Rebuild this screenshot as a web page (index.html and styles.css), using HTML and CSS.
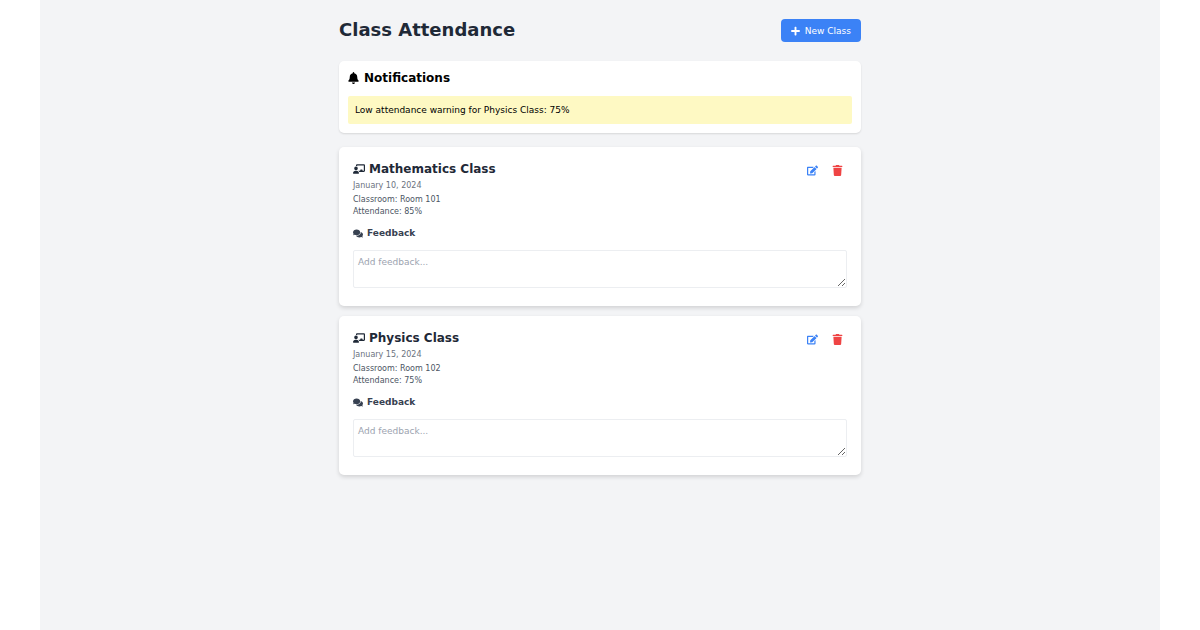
FILE: index.html
```html
<!DOCTYPE html>
<html lang="en">
<head>
  <meta charset="UTF-8">
  <meta name="viewport" content="width=device-width, initial-scale=1.0">
  <title>Class Attendance</title>
  <link rel="stylesheet" href="styles.css">
</head>
<body>

<!-- Shared icons -->
<svg class="icon-defs" aria-hidden="true">
  <symbol id="icon-teacher" viewBox="0 0 640 512">
    <path d="M160 64c0-35.3 28.7-64 64-64H576c35.3 0 64 28.7 64 64V352c0 35.3-28.7 64-64 64H336.8c-11.8-25.5-29.9-47.5-52.4-64H384V320c0-17.7 14.3-32 32-32h64c17.7 0 32 14.3 32 32v32h64V64H224v49.1C205.2 102.2 183.3 96 160 96V64zm0 64a96 96 0 1 1 0 192 96 96 0 1 1 0-192zM133.3 352h53.3C260.3 352 320 411.7 320 485.3c0 14.7-11.9 26.7-26.7 26.7H26.7C11.9 512 0 500.1 0 485.3C0 411.7 59.7 352 133.3 352z"/>
  </symbol>
  <symbol id="icon-comments" viewBox="0 0 576 512">
    <path d="M416 192c0-88.4-93.1-160-208-160S0 103.6 0 192c0 34.3 14.1 65.9 38 92-13.4 30.2-35.5 54.2-35.8 54.5-2.2 2.3-2.8 5.7-1.5 8.7S4.8 352 8 352c36.6 0 66.9-12.3 88.7-25 32.2 15.7 70.3 25 111.3 25 114.9 0 208-71.6 208-160zm122 220c23.9-26 38-57.7 38-92 0-66.9-53.5-124.2-129.3-148.1.9 6.6 1.3 13.3 1.3 20.1 0 105.9-107.7 192-240 192-10.8 0-21.3-.8-31.7-1.9C207.8 439.6 281.8 480 368 480c41 0 79.1-9.2 111.3-25 21.8 12.7 52.1 25 88.7 25 3.2 0 6.1-1.9 7.3-4.8 1.3-2.9.7-6.3-1.5-8.7-.3-.3-22.4-24.2-35.8-54.5z"/>
  </symbol>
  <symbol id="icon-edit" viewBox="0 0 576 512">
    <path d="M402.6 83.2l90.2 90.2c3.8 3.8 3.8 10 0 13.8L274.4 405.6l-92.8 10.3c-12.4 1.4-22.9-9.1-21.5-21.5l10.3-92.8L388.8 83.2c3.8-3.8 10-3.8 13.8 0zm162-22.9l-48.8-48.8c-15.2-15.2-39.9-15.2-55.2 0l-35.4 35.4c-3.8 3.8-3.8 10 0 13.8l90.2 90.2c3.8 3.8 10 3.8 13.8 0l35.4-35.4c15.2-15.3 15.2-40 0-55.2zM384 346.2V448H64V128h229.8c3.2 0 6.2-1.3 8.5-3.5l40-40c7.6-7.6 2.2-20.5-8.5-20.5H48C21.5 64 0 85.5 0 112v352c0 26.5 21.5 48 48 48h352c26.5 0 48-21.5 48-48V306.2c0-10.7-12.9-16-20.5-8.5l-40 40c-2.2 2.3-3.5 5.3-3.5 8.5z"/>
  </symbol>
  <symbol id="icon-trash" viewBox="0 0 448 512">
    <path d="M432 32H312l-9.4-18.7A24 24 0 0 0 281.1 0H166.8a23.72 23.72 0 0 0-21.4 13.3L136 32H16A16 16 0 0 0 0 48v32a16 16 0 0 0 16 16h416a16 16 0 0 0 16-16V48a16 16 0 0 0-16-16zM53.2 467a48 48 0 0 0 47.9 45h245.8a48 48 0 0 0 47.9-45L416 128H32z"/>
  </symbol>
</svg>

<main class="container">
  <header class="page-header">
    <h1>Class Attendance</h1>
    <button type="button" class="new-class">
      <svg class="icon-plus" viewBox="0 0 448 512" aria-hidden="true"><path d="M416 208H272V64c0-17.67-14.33-32-32-32h-32c-17.67 0-32 14.33-32 32v144H32c-17.67 0-32 14.33-32 32v32c0 17.67 14.33 32 32 32h144v144c0 17.67 14.33 32 32 32h32c17.67 0 32-14.33 32-32V304h144c17.67 0 32-14.33 32-32v-32c0-17.67-14.33-32-32-32z"/></svg>
      New Class
    </button>
  </header>

  <section class="notifications">
    <h2>
      <svg class="icon-bell" viewBox="0 0 448 512" aria-hidden="true"><path d="M224 512c35.32 0 63.97-28.65 63.97-64H160.03c0 35.35 28.65 64 63.97 64zm215.39-149.71c-19.32-20.76-55.47-51.99-55.47-154.29 0-77.7-54.48-139.9-127.94-155.16V32c0-17.67-14.32-32-31.98-32s-31.98 14.33-31.98 32v20.84C118.56 68.1 64.08 130.3 64.08 208c0 102.3-36.15 133.53-55.47 154.29-6 6.45-8.66 14.16-8.61 21.71.11 16.4 12.98 32 32.1 32h383.8c19.12 0 32-15.6 32.1-32 .05-7.55-2.61-15.27-8.61-21.71z"/></svg>
      Notifications
    </h2>
    <p class="warning">Low attendance warning for Physics Class: 75%</p>
  </section>

  <div class="class-list">
    <article class="class-card">
      <div class="class-top">
        <div>
          <h2><svg class="icon-teacher" aria-hidden="true"><use href="#icon-teacher"/></svg>Mathematics Class</h2>
          <p class="date">January 10, 2024</p>
          <p class="detail">Classroom: Room 101</p>
          <p class="detail">Attendance: 85%</p>
        </div>
        <div class="actions">
          <button type="button" class="edit" aria-label="Edit"><svg aria-hidden="true"><use href="#icon-edit"/></svg></button>
          <button type="button" class="delete" aria-label="Delete"><svg aria-hidden="true"><use href="#icon-trash"/></svg></button>
        </div>
      </div>
      <label for="feedback1"><svg class="icon-comments" aria-hidden="true"><use href="#icon-comments"/></svg>Feedback</label>
      <textarea id="feedback1" placeholder="Add feedback..."></textarea>
    </article>

    <article class="class-card">
      <div class="class-top">
        <div>
          <h2><svg class="icon-teacher" aria-hidden="true"><use href="#icon-teacher"/></svg>Physics Class</h2>
          <p class="date">January 15, 2024</p>
          <p class="detail">Classroom: Room 102</p>
          <p class="detail">Attendance: 75%</p>
        </div>
        <div class="actions">
          <button type="button" class="edit" aria-label="Edit"><svg aria-hidden="true"><use href="#icon-edit"/></svg></button>
          <button type="button" class="delete" aria-label="Delete"><svg aria-hidden="true"><use href="#icon-trash"/></svg></button>
        </div>
      </div>
      <label for="feedback2"><svg class="icon-comments" aria-hidden="true"><use href="#icon-comments"/></svg>Feedback</label>
      <textarea id="feedback2" placeholder="Add feedback..."></textarea>
    </article>
  </div>
</main>

</body>
</html>
```
FILE: styles.css
```css
* { box-sizing: border-box; }
html { background: #fff; }
body {
  margin: 0 40px;
  min-height: 100vh;
  background: #f3f4f6;
  color: #000;
  font-family: "DejaVu Sans", sans-serif;
  font-size: 9px;
  line-height: 14px;
}
h1, h2, p { margin: 0; }
button, textarea { font: inherit; }
button { border: none; cursor: pointer; }
svg { fill: currentColor; flex: none; }
.icon-defs { position: absolute; width: 0; height: 0; }

.container {
  max-width: 522px;
  margin: 0 auto;
  padding: 19px 0;
}
.page-header {
  display: flex;
  align-items: flex-start;
  justify-content: space-between;
  margin-bottom: 19px;
}
h1 { font-size: 18px; line-height: 21px; color: #1f2937; }
h2 {
  display: flex;
  align-items: center;
  gap: 5px;
  font-size: 12px;
  line-height: 16px;
}
.new-class {
  display: flex;
  align-items: center;
  gap: 5px;
  height: 23px;
  padding: 0 10px;
  border-radius: 4px;
  background: #3b82f6;
  color: #fff;
}
.icon-plus { width: 9px; height: 10px; }

.notifications {
  margin-bottom: 14px;
  padding: 9px;
  border-radius: 5px;
  background: #fff;
  box-shadow: 0 1px 2px rgba(0, 0, 0, 0.12);
}
.icon-bell { width: 11px; height: 12px; }
.warning {
  margin-top: 10px;
  padding: 7px;
  border-radius: 2px;
  background: #fef9c3;
}

.class-list {
  display: flex;
  flex-direction: column;
  gap: 10px;
}
.class-card {
  padding: 14px;
  border-radius: 5px;
  background: #fff;
  box-shadow: 0 2px 4px rgba(0, 0, 0, 0.14);
}
.class-top {
  display: flex;
  justify-content: space-between;
}
.class-card h2 { gap: 4px; color: #1f2937; }
.icon-teacher { width: 12px; height: 10px; }
.date { margin: 2px 0 1px; font-size: 8px; color: #6b7280; }
.detail { font-size: 8px; line-height: 12px; color: #4b5563; }
.actions {
  display: flex;
  align-items: flex-start;
  gap: 14px;
  padding: 4px 4px 0 0;
}
.actions button { padding: 0; background: none; }
.actions svg { display: block; width: 11px; height: 11px; }
.edit { color: #3b82f6; }
.delete { color: #ef4444; }
.class-card label {
  display: flex;
  align-items: center;
  gap: 4px;
  margin: 8px 0 10px;
  font-weight: bold;
  color: #374151;
}
.icon-comments { width: 10px; height: 9px; }
textarea {
  display: block;
  width: 100%;
  height: 38px;
  margin-bottom: 4px;
  padding: 4px;
  border: 1px solid #eceef1;
  border-radius: 2px;
  resize: vertical;
}
textarea::placeholder { color: #9ca3af; }
```
